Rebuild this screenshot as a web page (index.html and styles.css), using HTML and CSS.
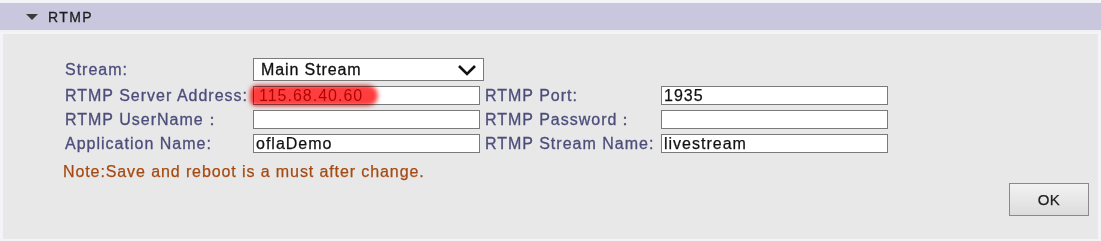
FILE: index.html
```html
<!DOCTYPE html>
<html>
<head>
<meta charset="utf-8">
<link rel="stylesheet" href="styles.css">
</head>
<body>
<div class="header">
  <span class="tri"></span>
  <span class="title">RTMP</span>
</div>
<div class="panel">
  <div class="form">
    <div class="label">Stream:</div>
    <div class="select">
      <span>Main Stream</span>
      <svg class="chev" width="20" height="12" viewBox="0 0 20 12"><polyline points="2,2 10,10 18,2" fill="none" stroke="#111" stroke-width="2.6"/></svg>
    </div>
    <div class="label2 empty"></div>
    <div class="empty"></div>

    <div class="label">RTMP Server Address:</div>
    <div class="field redacted"><span class="ip">115.68.40.60</span><span class="scribble"></span></div>
    <div class="label2">RTMP Port:</div>
    <div class="field">1935</div>

    <div class="label">RTMP UserName：</div>
    <div class="field"></div>
    <div class="label2">RTMP Password：</div>
    <div class="field"></div>

    <div class="label">Application Name:</div>
    <div class="field">oflaDemo</div>
    <div class="label2">RTMP Stream Name:</div>
    <div class="field">livestream</div>
  </div>
  <div class="note">Note:Save and reboot is a must after change.</div>
  <div class="actions">
    <button class="ok">OK</button>
  </div>
</div>
</body>
</html>
```
FILE: styles.css
```css
html, body {
  margin: 0;
  padding: 0;
}
body {
  width: 1101px;
  height: 241px;
  background: #f4f4f8;
  font-family: "Liberation Sans", Arial, sans-serif;
  overflow: hidden;
  padding-top: 3px;
  box-sizing: border-box;
}
.header {
  height: 29px;
  background: #c9c7de;
  display: flex;
  align-items: center;
  padding-left: 26px;
  box-sizing: border-box;
  border-bottom: 2px solid #f0f0f5;
}
.tri {
  width: 0;
  height: 0;
  border-left: 6px solid transparent;
  border-right: 6px solid transparent;
  border-top: 6px solid #3a3a3a;
  margin-right: 10px;
  margin-top: 1px;
}
.title {
  font-size: 14px;
  letter-spacing: 1.4px;
  color: #1e1e1e;
  -webkit-text-stroke: 0.3px #1e1e1e;
}
.panel {
  margin: 2px 3px 0 3px;
  height: 205px;
  background: #e8e8e8;
  padding: 24px 0 0 62px;
  box-sizing: border-box;
}
.form {
  display: grid;
  grid-template-columns: 188px 232px 176px 227px;
  grid-auto-rows: 19px;
  grid-template-rows: 23px;
  row-gap: 5px;
  font-size: 16px;
  letter-spacing: 1px;
}
.label, .label2 {
  color: #4d4d7c;
  -webkit-text-stroke: 0.3px #4d4d7c;
  display: flex;
  align-items: center;
  white-space: nowrap;
  line-height: 19px;
}
.select {
  width: 231px;
  height: 23px;
  box-sizing: border-box;
  border: 1px solid #7a7a7a;
  background: #fff;
  display: flex;
  align-items: center;
  justify-content: space-between;
  padding: 0 6px 0 7px;
  color: #111;
  -webkit-text-stroke: 0.3px #111;
  letter-spacing: 0.9px;
}
.chev {
  display: block;
}
.field {
  width: 227px;
  height: 19px;
  box-sizing: border-box;
  border: 1px solid #7a7a7a;
  background: #fff;
  padding-left: 2px;
  line-height: 17px;
  color: #111;
  -webkit-text-stroke: 0.25px #111;
  white-space: nowrap;
}
.redacted {
  position: relative;
  overflow: visible;
}
.ip {
  color: #b01010;
  -webkit-text-stroke: 0;
  position: relative;
  left: 3px;
}
.scribble {
  position: absolute;
  left: -4px;
  top: -2px;
  width: 128px;
  height: 21px;
  background: #ff1a1a;
  border-radius: 10px 14px 14px 8px;
  filter: blur(2px);
  opacity: 0.85;
  mix-blend-mode: multiply;
}
.note {
  margin-top: 10px;
  font-size: 16px;
  letter-spacing: 0.9px;
  color: #a54a12;
  -webkit-text-stroke: 0.25px #a54a12;
  line-height: 18px;
  margin-left: -2px;
}
.actions {
  display: flex;
  justify-content: flex-end;
  padding-right: 9px;
  margin-top: 2px;
}
.ok {
  width: 80px;
  height: 33px;
  border: 1px solid #8a8a8a;
  background: linear-gradient(#f2f2f2, #dcdcdc);
  font-family: "Liberation Sans", Arial, sans-serif;
  font-size: 15px;
  letter-spacing: 0.5px;
  color: #222;
  -webkit-text-stroke: 0.25px #222;
  padding: 0;
}
```
